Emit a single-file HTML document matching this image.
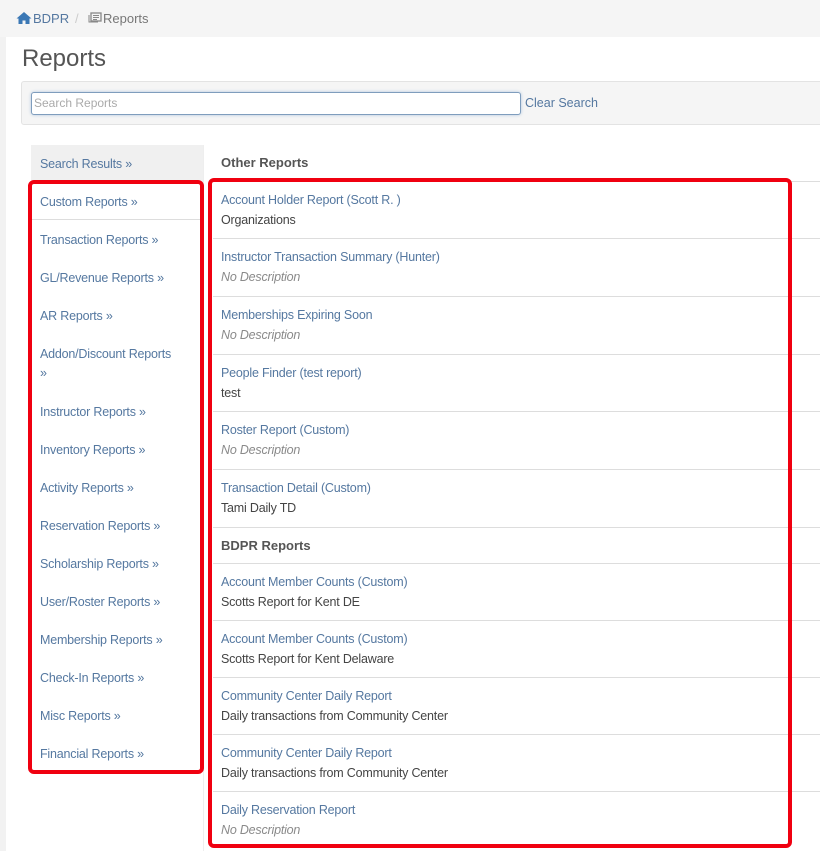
<!DOCTYPE html>
<html><head><meta charset="utf-8"><style>
*{box-sizing:border-box;margin:0;padding:0}
body{width:820px;height:851px;overflow:hidden;background:#fff;font-family:"Liberation Sans",sans-serif;position:relative;color:#333}
.a{position:absolute;white-space:nowrap}
.lk{color:#5578a0;font-size:13px}
.nav{position:absolute;left:40px;font-size:12.5px;color:#5578a0;letter-spacing:-0.2px}
.row{position:absolute;left:213px;right:0;border-top:1px solid #ddd}
.t1{position:absolute;left:8px;top:11px;font-size:12.5px;color:#5578a0;letter-spacing:-0.2px;white-space:nowrap}
.t2{position:absolute;left:8px;top:31px;font-size:12.5px;color:#444;letter-spacing:-0.2px;white-space:nowrap}
.t2 i{color:#8a8a8a}
.hd{position:absolute;left:8px;top:10px;font-size:13px;font-weight:bold;color:#555}
.red{position:absolute;border:4px solid #f00010;border-radius:6px}
</style></head><body>
<div class="a" style="left:0;top:0;width:820px;height:37px;background:#f5f5f5"></div>
<div class="a" style="left:0;top:37px;width:6px;height:814px;background:#f2f2f2"></div>
<svg class="a" style="left:16px;top:11px" width="16" height="14" viewBox="0 0 16 14"><path d="M8 1L0.5 7.5h2V13h4V9.5h3V13h4V7.5h2z" fill="#3b78b5"/></svg>
<div class="a" style="left:33px;top:11px;font-size:13px;color:#5578a0">BDPR</div>
<div class="a" style="left:75px;top:11px;font-size:13px;color:#ccc">/</div>
<svg class="a" style="left:88px;top:12px" width="14" height="12" viewBox="0 0 14 12"><rect x="3" y="1" width="10" height="8" fill="none" stroke="#888" stroke-width="1.3"/><path d="M1 3v7h9M5 3.5h6M5 5.5h6M5 7.5h4" stroke="#888" stroke-width="1" fill="none"/></svg>
<div class="a" style="left:103px;top:11px;font-size:13px;color:#777">Reports</div>
<div class="a" style="left:22px;top:45px;font-size:24px;color:#555">Reports</div>
<div class="a" style="left:21px;top:81px;width:810px;height:44px;background:#f5f5f5;border:1px solid #e3e3e3;border-radius:3px"></div>
<div class="a" style="left:31px;top:92px;width:490px;height:23px;background:#fff;border:1px solid #7f9dbd;border-radius:3px;box-shadow:0 0 3px #b0c6dd"></div>
<div class="a" style="left:34px;top:96px;font-size:12px;color:#aaa">Search Reports</div>
<div class="a lk" style="left:525px;top:96px;font-size:12.5px">Clear Search</div>
<div class="a" style="left:31px;top:145px;width:172px;height:37px;background:#f0f0f0"></div>
<div class="a" style="left:31px;top:219px;width:172px;height:1px;background:#ddd"></div>
<div class="nav" style="top:157px">Search Results »</div>
<div class="nav" style="top:195px">Custom Reports »</div>
<div class="nav" style="top:233px">Transaction Reports »</div>
<div class="nav" style="top:271px">GL/Revenue Reports »</div>
<div class="nav" style="top:309px">AR Reports »</div>
<div class="nav" style="top:347px">Addon/Discount Reports<br><span style="line-height:24px">»</span></div>
<div class="nav" style="top:405px">Instructor Reports »</div>
<div class="nav" style="top:443px">Inventory Reports »</div>
<div class="nav" style="top:481px">Activity Reports »</div>
<div class="nav" style="top:519px">Reservation Reports »</div>
<div class="nav" style="top:557px">Scholarship Reports »</div>
<div class="nav" style="top:595px">User/Roster Reports »</div>
<div class="nav" style="top:633px">Membership Reports »</div>
<div class="nav" style="top:671px">Check-In Reports »</div>
<div class="nav" style="top:709px">Misc Reports »</div>
<div class="nav" style="top:747px">Financial Reports »</div>
<div class="a" style="left:203px;top:145px;width:1px;height:706px;background:#eee"></div>
<div class="row" style="top:145px;border-top:none;height:36px"><div class="hd">Other Reports</div></div>
<div class="row" style="top:181px"><div class="t1">Account Holder Report (Scott R. )</div><div class="t2">Organizations</div></div>
<div class="row" style="top:238px"><div class="t1">Instructor Transaction Summary (Hunter)</div><div class="t2"><i>No Description</i></div></div>
<div class="row" style="top:296px"><div class="t1">Memberships Expiring Soon</div><div class="t2"><i>No Description</i></div></div>
<div class="row" style="top:354px"><div class="t1">People Finder (test report)</div><div class="t2">test</div></div>
<div class="row" style="top:411px"><div class="t1">Roster Report (Custom)</div><div class="t2"><i>No Description</i></div></div>
<div class="row" style="top:469px"><div class="t1">Transaction Detail (Custom)</div><div class="t2">Tami Daily TD</div></div>
<div class="row" style="top:527px"><div class="hd" style="top:10px">BDPR Reports</div></div>
<div class="row" style="top:563px"><div class="t1">Account Member Counts (Custom)</div><div class="t2">Scotts Report for Kent DE</div></div>
<div class="row" style="top:620px"><div class="t1">Account Member Counts (Custom)</div><div class="t2">Scotts Report for Kent Delaware</div></div>
<div class="row" style="top:677px"><div class="t1">Community Center Daily Report</div><div class="t2">Daily transactions from Community Center</div></div>
<div class="row" style="top:734px"><div class="t1">Community Center Daily Report</div><div class="t2">Daily transactions from Community Center</div></div>
<div class="row" style="top:791px"><div class="t1">Daily Reservation Report</div><div class="t2"><i>No Description</i></div></div>
<div class="red" style="left:28px;top:180px;width:176px;height:594px"></div>
<div class="red" style="left:208px;top:178px;width:584px;height:670px"></div>
</body></html>
